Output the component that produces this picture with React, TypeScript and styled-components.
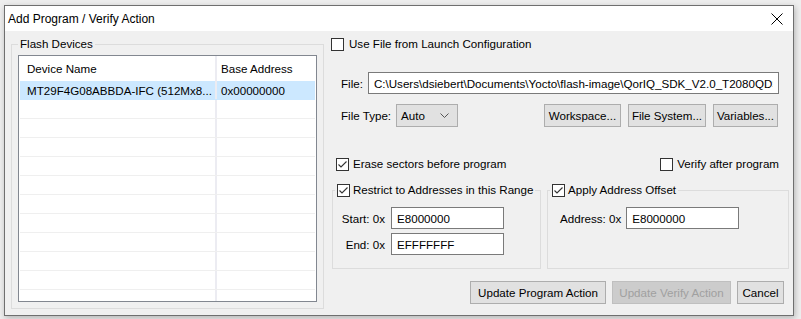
import React from "react";
import styled, { createGlobalStyle } from "styled-components";

const GlobalStyle = createGlobalStyle`
  html, body {
    margin: 0;
    padding: 0;
    background: #eeeeee;
    font-family: "Liberation Sans", Arial, sans-serif;
    font-size: 11.6px;
    color: #000;
  }
`;

const FILE_PATH =
  "C:\\Users\\dsiebert\\Documents\\Yocto\\flash-image\\QorIQ_SDK_V2.0_T2080QDS_flash.bin";

const ROWS = 12;

const Check = ({ checked }: { checked?: boolean }) => (
  <CheckBox>
    {checked && (
      <svg width="11" height="11" viewBox="0 0 11 11">
        <polyline points="1.5,5.5 4,8 9.5,2.5" fill="none" stroke="#333" strokeWidth="1.1" />
      </svg>
    )}
  </CheckBox>
);

export default function App() {
  return (
    <>
      <GlobalStyle />
      <Desktop>
        <Dialog>
          <TitleBar>
            <Title>Add Program / Verify Action</Title>
            <CloseIcon width="12" height="12" viewBox="0 0 12 12">
              <path d="M0.5 0.5 L11.5 11.5 M11.5 0.5 L0.5 11.5" stroke="#000" strokeWidth="1" />
            </CloseIcon>
          </TitleBar>

          <Body>
            <DevicesGroup>
              <Legend>Flash Devices</Legend>
              <Table>
                <HeaderRow>
                  <NameCell>Device Name</NameCell>
                  <AddrCell>Base Address</AddrCell>
                </HeaderRow>
                <Row $selected>
                  <NameCell>MT29F4G08ABBDA-IFC (512Mx8...</NameCell>
                  <AddrCell>0x00000000</AddrCell>
                </Row>
                {Array.from({ length: ROWS }).map((_, i) => (
                  <Row key={i}>
                    <NameCell />
                    <AddrCell />
                  </Row>
                ))}
              </Table>
            </DevicesGroup>

            <Options>
              <LaunchRow>
                <Check />
                <span>Use File from Launch Configuration</span>
              </LaunchRow>

              <FileRow>
                <FieldLabel>File:</FieldLabel>
                <PathInput readOnly value={FILE_PATH} />
              </FileRow>

              <TypeRow>
                <FieldLabel>File Type:</FieldLabel>
                <Select>
                  <span>Auto</span>
                  <svg width="9" height="5" viewBox="0 0 9 5">
                    <polyline points="0.5,0.5 4.5,4.5 8.5,0.5" fill="none" stroke="#555" strokeWidth="1" />
                  </svg>
                </Select>
                <Spacer />
                <BrowseButtons>
                  <Button $width={77}>Workspace...</Button>
                  <Button $width={78}>File System...</Button>
                  <Button $width={65}>Variables...</Button>
                </BrowseButtons>
              </TypeRow>

              <EraseRow>
                <CheckLabel>
                  <Check checked />
                  <span>Erase sectors before program</span>
                </CheckLabel>
                <CheckLabel>
                  <Check />
                  <span>Verify after program</span>
                </CheckLabel>
              </EraseRow>

              <GroupsRow>
                <RangeGroup>
                  <CheckLegend>
                    <Check checked />
                    <span>Restrict to Addresses in this Range</span>
                  </CheckLegend>
                  <AddressGrid>
                    <GridLabel>Start: 0x</GridLabel>
                    <HexInput readOnly value="E8000000" />
                    <GridLabel>End: 0x</GridLabel>
                    <HexInput readOnly value="EFFFFFFF" />
                  </AddressGrid>
                </RangeGroup>

                <OffsetGroup>
                  <CheckLegend>
                    <Check checked />
                    <span>Apply Address Offset</span>
                  </CheckLegend>
                  <OffsetRow>
                    <GridLabel>Address: 0x</GridLabel>
                    <HexInput readOnly value="E8000000" />
                  </OffsetRow>
                </OffsetGroup>
              </GroupsRow>

              <ActionRow>
                <Button $width={136}>Update Program Action</Button>
                <Button $width={119} disabled>
                  Update Verify Action
                </Button>
                <Button $width={47}>Cancel</Button>
              </ActionRow>
            </Options>
          </Body>
        </Dialog>
      </Desktop>
    </>
  );
}

const Desktop = styled.div`
  width: 801px;
  height: 319px;
  overflow: hidden;
  padding: 5px 0 0 4px;
  box-sizing: border-box;
`;

const Dialog = styled.div`
  width: 790px;
  height: 311px;
  box-sizing: border-box;
  border: 1px solid #6f6f6f;
  background: #f0f0f0;
  box-shadow: 1px 2px 6px rgba(0, 0, 0, 0.25);
  display: flex;
  flex-direction: column;
`;

const TitleBar = styled.div`
  height: 25px;
  flex: none;
  background: #fff;
  display: flex;
  align-items: center;
  padding: 0 10px 0 3px;
`;

const Title = styled.div`
  flex: 1;
  font-size: 12px;
  padding-top: 1px;
`;

const CloseIcon = styled.svg`
  display: block;
  margin-top: 1px;
`;

const Body = styled.div`
  flex: 1;
  display: flex;
  padding: 5px 4px 0 6px;
`;

const Fieldset = styled.fieldset`
  margin: 0;
  border: 1px solid #dcdcdc;
  box-sizing: border-box;
  min-width: 0;
`;

const Legend = styled.legend`
  padding: 0 2px;
  margin-left: 6px;
  line-height: 16px;
`;

const DevicesGroup = styled(Fieldset)`
  width: 313px;
  height: 273px;
  padding: 3px 6px 6px 0;
  display: flex;
`;

const Table = styled.div`
  flex: 1;
  margin-left: 6px;
  border: 1px solid #828790;
  background: #fff;
  overflow: hidden;
  display: flex;
  flex-direction: column;
`;

const Row = styled.div<{ $selected?: boolean }>`
  display: flex;
  flex: none;
  height: 19px;
  box-sizing: border-box;
  border-bottom: 1px solid ${(p) => (p.$selected ? "#cce8ff" : "#efefef")};
  background: ${(p) => (p.$selected ? "#cce8ff" : "#fff")};
  margin: 0 1px;
`;

const HeaderRow = styled(Row)`
  height: 25px;
  border-bottom: none;
  background: #fff;
`;

const Cell = styled.div`
  display: flex;
  align-items: center;
  padding-left: 6px;
  white-space: nowrap;
  overflow: hidden;
  box-sizing: border-box;
`;

const NameCell = styled(Cell)`
  width: 197px;
  flex: none;
  border-right: 2px solid #ececf2;
  padding-left: 7px;
`;

const AddrCell = styled(Cell)`
  flex: 1;
  padding-left: 4px;
`;

const Options = styled.div`
  margin-left: 7px;
  width: 458px;
  display: flex;
  flex-direction: column;
`;

const CheckBox = styled.span`
  width: 13px;
  height: 13px;
  box-sizing: border-box;
  border: 1px solid #333;
  background: #fff;
  flex: none;
  display: inline-flex;
  align-items: center;
  justify-content: center;
`;

const CheckLabel = styled.label`
  display: flex;
  align-items: center;
  gap: 4px;
  line-height: 16px;
  white-space: nowrap;
`;

const LaunchRow = styled(CheckLabel)`
  height: 16px;
  gap: 5px;
`;

const FieldLabel = styled.span`
  white-space: nowrap;
`;

const FileRow = styled.div`
  display: flex;
  align-items: center;
  gap: 5px;
  margin-top: 20px;
  padding: 0 10px;
`;

const TextInput = styled.input`
  font: inherit;
  color: #000;
  border: 1px solid #7a7a7a;
  background: #fff;
  box-sizing: border-box;
  padding: 0 5px;
  outline: none;
  margin: 0;
`;

const PathInput = styled(TextInput)`
  flex: 1;
  height: 22px;
`;

const TypeRow = styled.div`
  display: flex;
  align-items: center;
  gap: 5px;
  margin-top: 10px;
  padding: 0 11px 0 10px;
`;

const Select = styled.div`
  width: 62px;
  height: 23px;
  box-sizing: border-box;
  border: 1px solid #adadad;
  background: #e1e1e1;
  display: flex;
  align-items: center;
  justify-content: space-between;
  padding: 0 8px 0 4px;
`;

const Spacer = styled.div`
  flex: 1;
`;

const BrowseButtons = styled.div`
  display: flex;
  gap: 7px;
`;

const Button = styled.button<{ $width: number }>`
  font: inherit;
  color: #000;
  width: ${(p) => p.$width}px;
  height: 23px;
  box-sizing: border-box;
  border: 1px solid #adadad;
  background: #e1e1e1;
  padding: 0;
  margin: 0;
  white-space: nowrap;

  &:disabled {
    color: #a0a0a0;
    background: #cccccc;
    border-color: #bfbfbf;
  }
`;

const EraseRow = styled.div`
  display: flex;
  justify-content: space-between;
  margin-top: 29px;
  padding: 0 10px 0 5px;
`;

const GroupsRow = styled.div`
  display: flex;
  gap: 6px;
  margin-top: 10px;
  padding-left: 1px;
`;

const CheckLegend = styled.legend`
  display: flex;
  align-items: center;
  gap: 3px;
  padding: 0 2px;
  margin-left: 2px;
  line-height: 16px;
  white-space: nowrap;
`;

const RangeGroup = styled(Fieldset)`
  width: 209px;
  height: 87px;
  padding: 9px 0 0 0;
`;

const OffsetGroup = styled(Fieldset)`
  flex: 1;
  height: 87px;
  padding: 9px 0 0 0;
`;

const AddressGrid = styled.div`
  display: grid;
  grid-template-columns: 41px 113px;
  column-gap: 6px;
  row-gap: 4px;
  align-items: center;
  margin-left: 11px;
`;

const GridLabel = styled.span`
  justify-self: end;
  white-space: nowrap;
`;

const HexInput = styled(TextInput)`
  width: 113px;
  height: 22px;
`;

const OffsetRow = styled.div`
  display: flex;
  align-items: center;
  gap: 5px;
  margin-left: 12px;
`;

const ActionRow = styled.div`
  display: flex;
  justify-content: flex-end;
  gap: 6px;
  margin-top: 12px;
  padding-right: 5px;
`;
